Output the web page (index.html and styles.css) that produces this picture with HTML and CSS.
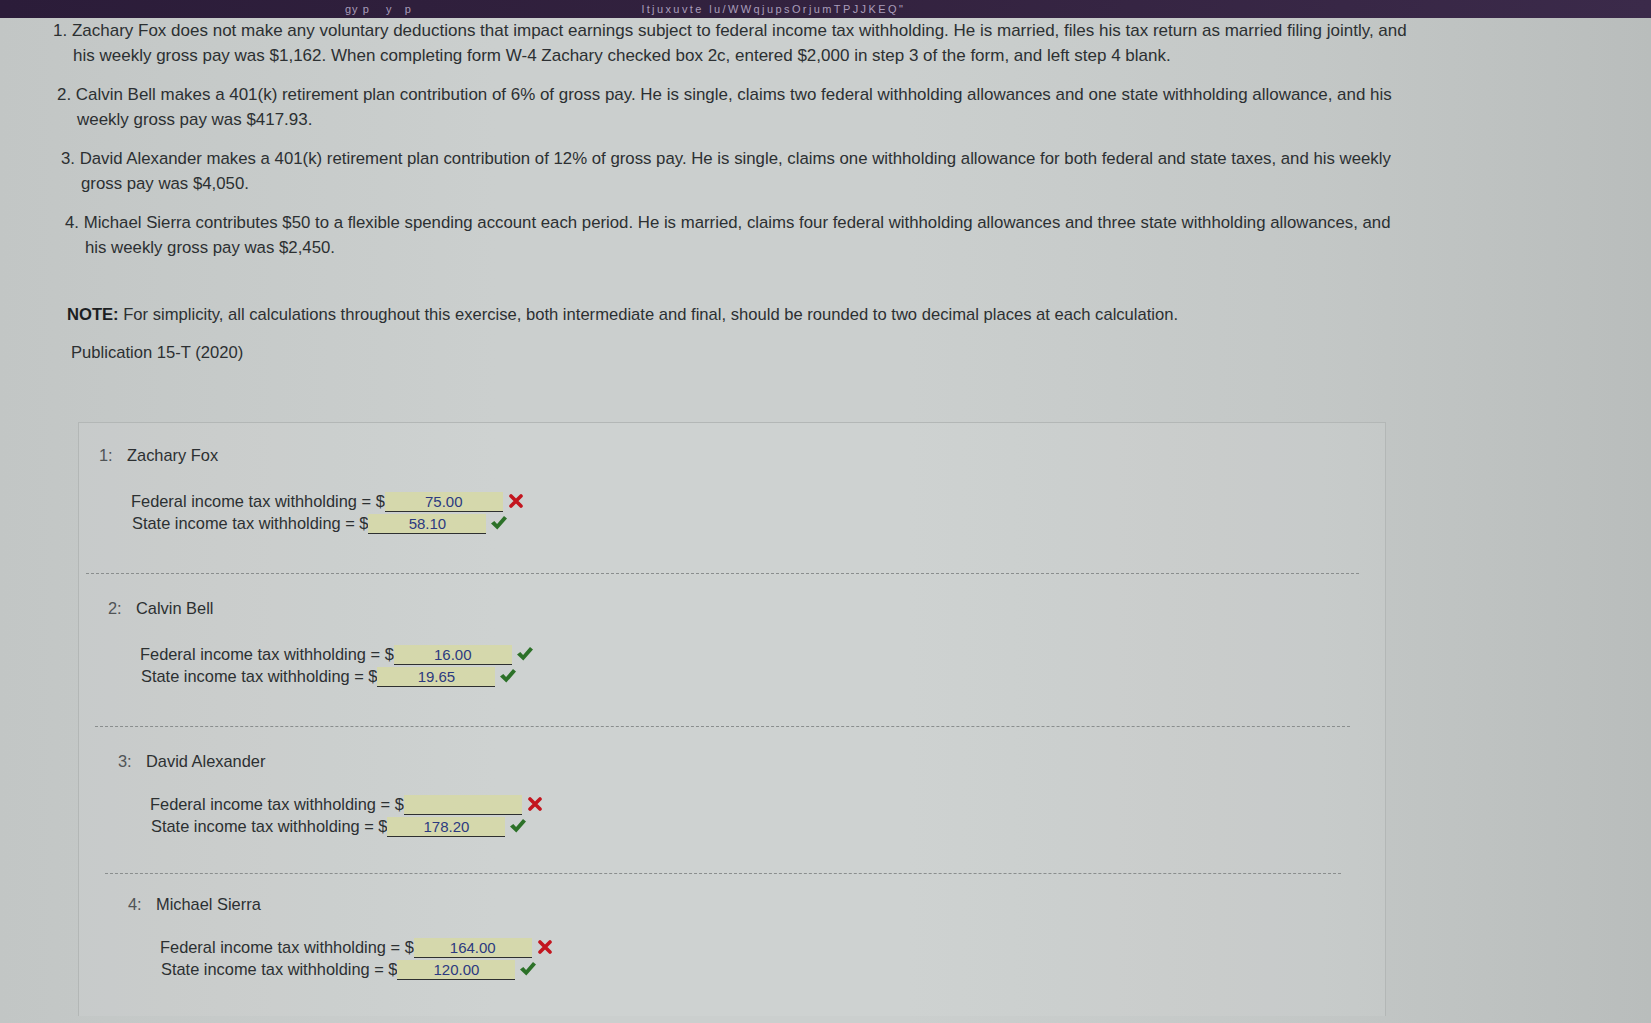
FILE: index.html
```html
<!DOCTYPE html>
<html lang="en">
<head>
<meta charset="utf-8">
<title>Payroll withholding exercise</title>
<link rel="stylesheet" href="styles.css">
</head>
<body>
<div class="topbar"><span class="topbar-text">gy p&nbsp;&nbsp;&nbsp;&nbsp;y&nbsp;&nbsp;&nbsp;p</span><span class="topbar-text url">ltjuxuvte lu/WWqjupsOrjumTPJJKEQ"</span></div>
<main class="page">
  <ol class="problems">
    <li class="problem">1. Zachary Fox does not make any voluntary deductions that impact earnings subject to federal income tax withholding. He is married, files his tax return as married filing jointly, and<br>his weekly gross pay was $1,162. When completing form W-4 Zachary checked box 2c, entered $2,000 in step 3 of the form, and left step 4 blank.</li>
    <li class="problem">2. Calvin Bell makes a 401(k) retirement plan contribution of 6% of gross pay. He is single, claims two federal withholding allowances and one state withholding allowance, and his<br>weekly gross pay was $417.93.</li>
    <li class="problem">3. David Alexander makes a 401(k) retirement plan contribution of 12% of gross pay. He is single, claims one withholding allowance for both federal and state taxes, and his weekly<br>gross pay was $4,050.</li>
    <li class="problem">4. Michael Sierra contributes $50 to a flexible spending account each period. He is married, claims four federal withholding allowances and three state withholding allowances, and<br>his weekly gross pay was $2,450.</li>
  </ol>
  <p class="note"><strong>NOTE:</strong> For simplicity, all calculations throughout this exercise, both intermediate and final, should be rounded to two decimal places at each calculation.</p>
  <p class="pub">Publication 15-T (2020)</p>

  <section class="panel">
    <div class="answer">
      <div class="name"><span class="num">1:</span>Zachary Fox</div>
      <div class="rows">
        <div class="row"><span class="label">Federal income tax withholding = $</span><span class="field">75.00</span><svg class="mark" viewBox="0 0 16 14"><path class="x" d="M3 2 L13 12 M13 2 L3 12"/></svg></div>
        <div class="row"><span class="label">State income tax withholding = $</span><span class="field">58.10</span><svg class="mark" viewBox="0 0 16 14"><path class="check" d="M0 7.6 L3.3 4.9 L6.1 8 L13 0 L16 2.4 L6.3 13.6 Z"/></svg></div>
      </div>
      <div class="divider"></div>
    </div>
    <div class="answer">
      <div class="name"><span class="num">2:</span>Calvin Bell</div>
      <div class="rows">
        <div class="row"><span class="label">Federal income tax withholding = $</span><span class="field">16.00</span><svg class="mark" viewBox="0 0 16 14"><path class="check" d="M0 7.6 L3.3 4.9 L6.1 8 L13 0 L16 2.4 L6.3 13.6 Z"/></svg></div>
        <div class="row"><span class="label">State income tax withholding = $</span><span class="field">19.65</span><svg class="mark" viewBox="0 0 16 14"><path class="check" d="M0 7.6 L3.3 4.9 L6.1 8 L13 0 L16 2.4 L6.3 13.6 Z"/></svg></div>
      </div>
      <div class="divider"></div>
    </div>
    <div class="answer">
      <div class="name"><span class="num">3:</span>David Alexander</div>
      <div class="rows">
        <div class="row"><span class="label">Federal income tax withholding = $</span><span class="field"></span><svg class="mark" viewBox="0 0 16 14"><path class="x" d="M3 2 L13 12 M13 2 L3 12"/></svg></div>
        <div class="row"><span class="label">State income tax withholding = $</span><span class="field">178.20</span><svg class="mark" viewBox="0 0 16 14"><path class="check" d="M0 7.6 L3.3 4.9 L6.1 8 L13 0 L16 2.4 L6.3 13.6 Z"/></svg></div>
      </div>
      <div class="divider"></div>
    </div>
    <div class="answer">
      <div class="name"><span class="num">4:</span>Michael Sierra</div>
      <div class="rows">
        <div class="row"><span class="label">Federal income tax withholding = $</span><span class="field">164.00</span><svg class="mark" viewBox="0 0 16 14"><path class="x" d="M3 2 L13 12 M13 2 L3 12"/></svg></div>
        <div class="row"><span class="label">State income tax withholding = $</span><span class="field">120.00</span><svg class="mark" viewBox="0 0 16 14"><path class="check" d="M0 7.6 L3.3 4.9 L6.1 8 L13 0 L16 2.4 L6.3 13.6 Z"/></svg></div>
      </div>
    </div>
  </section>
</main>
</body>
</html>
```
FILE: styles.css
```css
html, body {
  margin: 0;
  padding: 0;
}
body {
  width: 1651px;
  height: 1023px;
  overflow: hidden;
  font-family: "Liberation Sans", Arial, sans-serif;
  color: #2c3032;
  background: linear-gradient(to right, #c2c6c5 0%, #cbcfce 30%, #cbcfce 55%, #c3c7c6 80%, #b9bdbc 100%);
}
.topbar {
  height: 18px;
  background: linear-gradient(to right, #2b1c39 0%, #33223f 50%, #3b2a4a 100%);
  display: flex;
  align-items: center;
}
.topbar-text {
  padding-left: 345px;
  font-size: 11px;
  line-height: 14px;
  color: #a99dba;
  white-space: nowrap;
  letter-spacing: 1px;
}
.topbar-text.url {
  padding-left: 230px;
  letter-spacing: 2.4px;
}
.page {
  display: flex;
  flex-direction: column;
}
.problems {
  list-style: none;
  margin: 0;
  padding: 0;
  display: flex;
  flex-direction: column;
  gap: 14px;
}
.problem {
  font-size: 16.8px;
  line-height: 25px;
  white-space: nowrap;
  padding-left: 73px;
  text-indent: -20px;
}
.problem:first-child { font-size: 17px; }
.problem:nth-child(2) { padding-left: 77px; font-size: 16.95px; }
.problem:nth-child(3) { padding-left: 81px; }
.problem:nth-child(4) { padding-left: 85px; }
.note {
  margin: 42px 0 0 67px;
  font-size: 16.6px;
  line-height: 25px;
  white-space: nowrap;
}
.note strong {
  color: #1c2022;
}
.pub {
  margin: 13px 0 0 71px;
  font-size: 16.6px;
  line-height: 25px;
}
.panel {
  margin: 57px 0 0 78px;
  width: 1308px;
  height: 594px;
  box-sizing: border-box;
  border: 1px solid #b3b7b6;
  border-bottom: none;
  background: rgba(255, 255, 255, 0.07);
  padding-top: 22px;
  display: flex;
  flex-direction: column;
}
.answer {
  display: flex;
  flex-direction: column;
}
.answer:nth-child(2) { margin-left: 9px; }
.answer:nth-child(3) { margin-left: 19px; }
.answer:nth-child(4) { margin-left: 29px; }
.name {
  font-size: 16.4px;
  line-height: 20px;
  padding-left: 20px;
  display: flex;
}
.num {
  width: 28px;
  color: #505456;
}
.rows {
  margin-top: 25px;
  padding-left: 52px;
  display: flex;
  flex-direction: column;
}
.answer:nth-child(3) .rows {
  margin-top: 22px;
}
.answer:nth-child(4) .rows {
  margin-top: 22px;
}
.row {
  display: flex;
  align-items: center;
  height: 22px;
  font-size: 16.4px;
}
.row + .row {
  padding-left: 1px;
}
.label {
  white-space: nowrap;
}
.field {
  display: inline-block;
  width: 118px;
  height: 20px;
  box-sizing: border-box;
  background: #d5d8ac;
  border-bottom: 1px solid #2e3030;
  color: #2c3a80;
  font-size: 15px;
  line-height: 19px;
  text-align: center;
  margin-top: 1px;
}
.mark {
  width: 16px;
  height: 14px;
  margin-left: 5px;
}
.x {
  stroke: #c3161f;
  stroke-width: 3.6;
  stroke-linecap: round;
  fill: none;
}
.check {
  fill: #2c7128;
}
.divider {
  margin: 39px 0 24px 7px;
  width: 1273px;
  border-top: 1px dashed #8a8e8e;
}
.answer:nth-child(2) .divider { width: 1255px; }
.answer:nth-child(3) .divider {
  width: 1236px;
  margin-top: 36px;
  margin-bottom: 20px;
}
```
